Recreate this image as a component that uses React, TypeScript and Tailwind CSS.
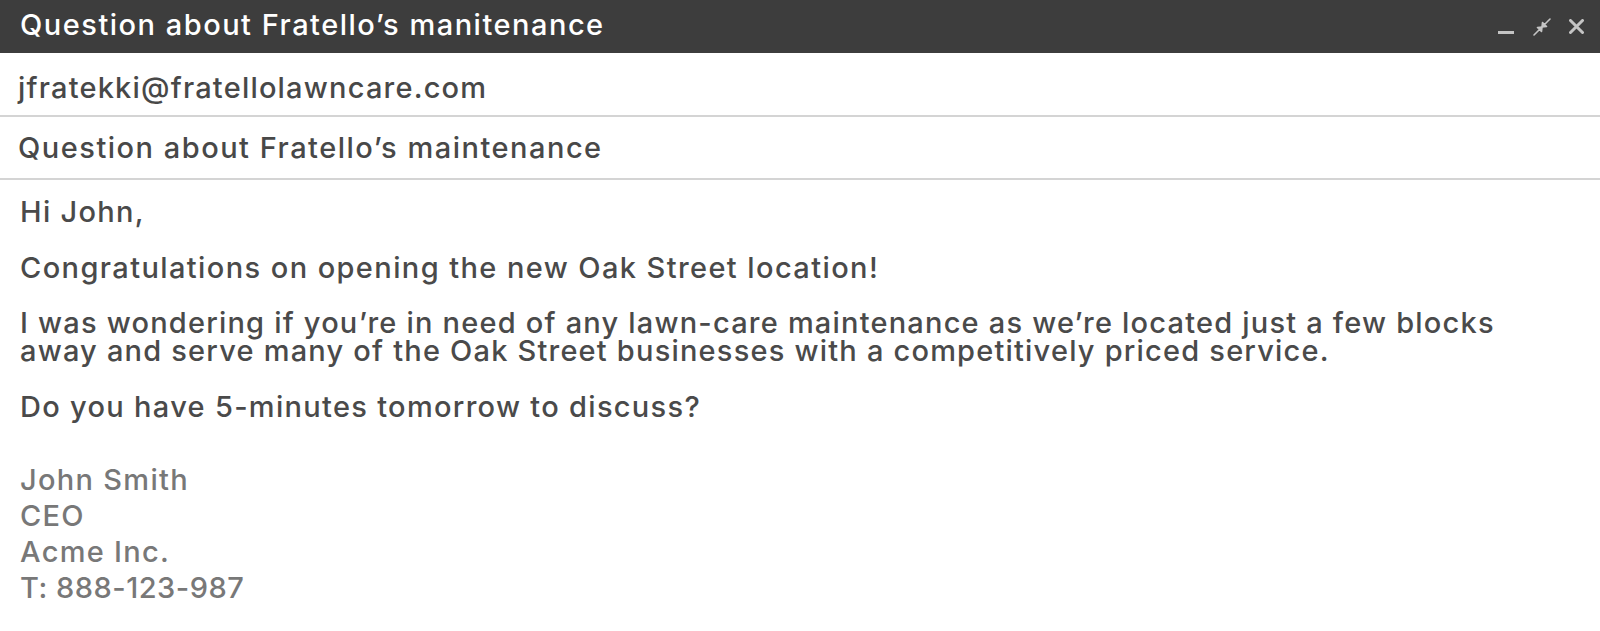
const font = { fontFamily: "Inter, 'Open Sans', sans-serif" }

const WindowButtons = () => (
    <div className="flex items-center gap-[18px] pr-4 text-[#c4c4c4]">
        {/* minimise */}
        <svg width="17" height="17" viewBox="0 0 17 17">
            <rect x="0" y="13" width="16" height="3" fill="currentColor" />
        </svg>
        {/* collapse */}
        <svg width="18" height="18" viewBox="0 0 18 18" fill="currentColor">
            <path d="M17 1 L11.5 6.5 L13.5 8.5 L9 9 L9.5 4.5 L11.5 6.5 L17 1 Z" stroke="currentColor" strokeWidth="1.6" strokeLinejoin="round" />
            <path d="M1 17 L6.5 11.5 L4.5 9.5 L9 9 L8.5 13.5 L6.5 11.5 Z" stroke="currentColor" strokeWidth="1.6" strokeLinejoin="round" />
        </svg>
        {/* close */}
        <svg width="15" height="15" viewBox="0 0 15 15">
            <path d="M1.5 1.5 L13.5 13.5 M13.5 1.5 L1.5 13.5" stroke="currentColor" strokeWidth="3" strokeLinecap="round" />
        </svg>
    </div>
)

const App = () => {
    return (
        <div className="w-[1600px] h-[631px] bg-white overflow-hidden" style={font}>
            {/* title bar */}
            <div className="h-[53px] bg-[#3d3d3d] flex items-center justify-between pl-5">
                <span className="text-white text-[29px] font-medium leading-none tracking-[1.5px] pb-1">
                    Question about Fratello’s manitenance
                </span>
                <WindowButtons />
            </div>

            {/* recipient */}
            <div className="h-[64px] flex items-center pl-[18px] pt-[7px] border-b-2 border-[#d4d4d4] text-[#484848] text-[29px] tracking-[1.2px] font-medium">
                jfratekki@fratellolawncare.com
            </div>

            {/* subject */}
            <div className="h-[63px] flex items-center pl-[18px] border-b-2 border-[#d4d4d4] text-[#484848] text-[29px] tracking-[1.5px] font-medium">
                Question about Fratello’s maintenance
            </div>

            {/* body */}
            <div className="px-5 pt-[18px] text-[29px] leading-[28px] tracking-[1.3px] font-medium text-[#4a4a4a]">
                <p>Hi John,</p>
                <p className="mt-[28px] tracking-[1.4px]">Congratulations on opening the new Oak Street location!</p>
                <p className="mt-[27px] tracking-[1.2px]">
                    I was wondering if you’re in need of any lawn-care maintenance as we’re located just a few blocks
                    <br />
                    away and serve many of the Oak Street businesses with a competitively priced service.
                </p>
                <p className="mt-[28px]">Do you have 5-minutes tomorrow to discuss?</p>

                <div className="mt-[41px] leading-[36px] text-[#787878]">
                    <div>John Smith</div>
                    <div>CEO</div>
                    <div>Acme Inc.</div>
                    <div className="tracking-[0.5px]">T: 888-123-987</div>
                </div>
            </div>
        </div>
    )
}

export default App
